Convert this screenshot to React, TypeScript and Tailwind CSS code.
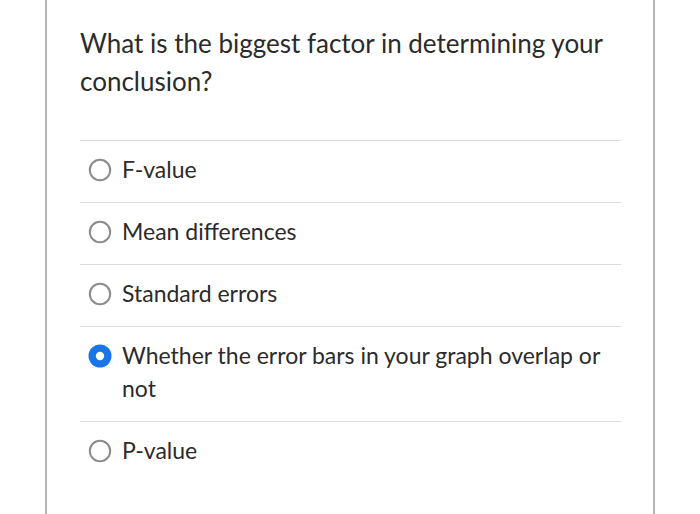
import React from "react";

const options = [
  { label: "F-value", selected: false },
  { label: "Mean differences", selected: false },
  { label: "Standard errors", selected: false },
  { label: "Whether the error bars in your graph overlap or not", selected: true },
  { label: "P-value", selected: false },
];

function Radio({ selected }: { selected: boolean }) {
  return (
    <svg width="24" height="24" viewBox="0 0 24 24" className="shrink-0">
      {selected ? (
        <>
          <circle cx="12" cy="12" r="11.5" fill="#1a76e8" />
          <circle cx="12" cy="12" r="4.2" fill="#ffffff" />
        </>
      ) : (
        <circle cx="12" cy="12" r="10.2" fill="#ffffff" stroke="#8c8c8c" strokeWidth="2" />
      )}
    </svg>
  );
}

export default function App() {
  return (
    <div className="w-[700px] h-[514px] bg-white overflow-hidden px-[45px]" style={{ fontFamily: "Lato, 'Open Sans', sans-serif" }}>
      <div className="h-full border-x-2 border-[#b5b5b5] pl-[33px] pr-[32px] pt-[24px]">
        <h1 className="text-[26px] leading-[38px] text-[#2b2b2b] font-normal">
          What is the biggest factor in determining your conclusion?
        </h1>
        <div className="mt-[40px]">
          {options.map((o, i) => (
            <div key={i} className="border-t border-[#dcdcdc] pt-[12px] pb-[16px] pl-[8px] flex items-start gap-[10px]">
              <div className="h-[33px] flex items-center">
                <Radio selected={o.selected} />
              </div>
              <span className="text-[23px] leading-[33px] text-[#2b2b2b]">{o.label}</span>
            </div>
          ))}
        </div>
      </div>
    </div>
  );
}
